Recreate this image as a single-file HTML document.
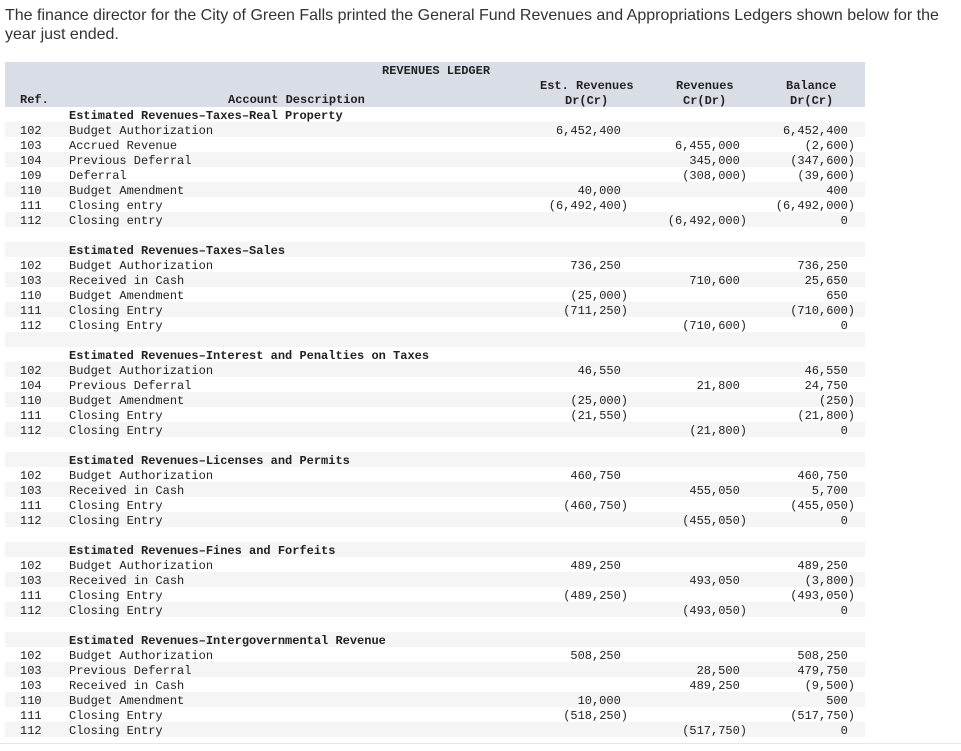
<!DOCTYPE html>
<html><head><meta charset="utf-8"><style>
body{margin:0;width:961px;height:751px;background:#fff;position:relative;overflow:hidden;font-family:"Liberation Sans",sans-serif;color:#333}
.intro{position:absolute;left:5px;top:6px;width:935px;font-size:16px;line-height:19px;color:#333}
.hd{position:absolute;left:5px;top:62px;width:860px;height:45px;background:#d9dde6}
.t{position:absolute;font-family:"Liberation Mono",monospace;font-size:12px;line-height:15px;white-space:pre;color:#222}
.b{font-weight:bold}
.r{position:absolute;left:5px;width:860px;height:15px;font-family:"Liberation Mono",monospace;font-size:12px;line-height:15px;white-space:pre;color:#222}
.g{background:#f5f5f5}
.r span{position:absolute;top:1.5px}
.ref{left:15px}.ds{left:64px}
.c1{right:237px;text-align:right}.c2{right:118px;text-align:right}.c3{right:10px;text-align:right}
.line{position:absolute;left:0;top:743px;width:961px;height:1px;background:#e6e6e6}
</style></head><body>
<div class="intro">The finance director for the City of Green Falls printed the General Fund Revenues and Appropriations Ledgers shown below for the year just ended.</div>
<div class="hd"></div>
<div class="t b" style="left:382px;top:64px">REVENUES LEDGER</div>
<div class="t b" style="left:20px;top:93px">Ref.</div>
<div class="t b" style="left:228px;top:93px">Account Description</div>
<div class="t b" style="left:540px;top:79px">Est. Revenues</div>
<div class="t b" style="left:565px;top:94px">Dr(Cr)</div>
<div class="t b" style="left:676px;top:79px">Revenues</div>
<div class="t b" style="left:683px;top:94px">Cr(Dr)</div>
<div class="t b" style="left:786px;top:79px">Balance</div>
<div class="t b" style="left:790px;top:94px">Dr(Cr)</div>

<div class="r" style="top:107px"><span class="ds b">Estimated Revenues–Taxes–Real Property</span></div>
<div class="r g" style="top:122px"><span class="ref">102</span><span class="ds">Budget Authorization</span><span class="c1">6,452,400 </span><span class="c3">6,452,400 </span></div>
<div class="r" style="top:137px"><span class="ref">103</span><span class="ds">Accrued Revenue</span><span class="c2">6,455,000 </span><span class="c3">(2,600)</span></div>
<div class="r g" style="top:152px"><span class="ref">104</span><span class="ds">Previous Deferral</span><span class="c2">345,000 </span><span class="c3">(347,600)</span></div>
<div class="r" style="top:167px"><span class="ref">109</span><span class="ds">Deferral</span><span class="c2">(308,000)</span><span class="c3">(39,600)</span></div>
<div class="r g" style="top:182px"><span class="ref">110</span><span class="ds">Budget Amendment</span><span class="c1">40,000 </span><span class="c3">400 </span></div>
<div class="r" style="top:197px"><span class="ref">111</span><span class="ds">Closing entry</span><span class="c1">(6,492,400)</span><span class="c3">(6,492,000)</span></div>
<div class="r g" style="top:212px"><span class="ref">112</span><span class="ds">Closing entry</span><span class="c2">(6,492,000)</span><span class="c3">0 </span></div>

<div class="r g" style="top:242px"><span class="ds b">Estimated Revenues–Taxes–Sales</span></div>
<div class="r" style="top:257px"><span class="ref">102</span><span class="ds">Budget Authorization</span><span class="c1">736,250 </span><span class="c3">736,250 </span></div>
<div class="r g" style="top:272px"><span class="ref">103</span><span class="ds">Received in Cash</span><span class="c2">710,600 </span><span class="c3">25,650 </span></div>
<div class="r" style="top:287px"><span class="ref">110</span><span class="ds">Budget Amendment</span><span class="c1">(25,000)</span><span class="c3">650 </span></div>
<div class="r g" style="top:302px"><span class="ref">111</span><span class="ds">Closing Entry</span><span class="c1">(711,250)</span><span class="c3">(710,600)</span></div>
<div class="r" style="top:317px"><span class="ref">112</span><span class="ds">Closing Entry</span><span class="c2">(710,600)</span><span class="c3">0 </span></div>
<div class="r g" style="top:332px"></div>

<div class="r" style="top:347px"><span class="ds b">Estimated Revenues–Interest and Penalties on Taxes</span></div>
<div class="r g" style="top:362px"><span class="ref">102</span><span class="ds">Budget Authorization</span><span class="c1">46,550 </span><span class="c3">46,550 </span></div>
<div class="r" style="top:377px"><span class="ref">104</span><span class="ds">Previous Deferral</span><span class="c2">21,800 </span><span class="c3">24,750 </span></div>
<div class="r g" style="top:392px"><span class="ref">110</span><span class="ds">Budget Amendment</span><span class="c1">(25,000)</span><span class="c3">(250)</span></div>
<div class="r" style="top:407px"><span class="ref">111</span><span class="ds">Closing Entry</span><span class="c1">(21,550)</span><span class="c3">(21,800)</span></div>
<div class="r g" style="top:422px"><span class="ref">112</span><span class="ds">Closing Entry</span><span class="c2">(21,800)</span><span class="c3">0 </span></div>

<div class="r g" style="top:452px"><span class="ds b">Estimated Revenues–Licenses and Permits</span></div>
<div class="r" style="top:467px"><span class="ref">102</span><span class="ds">Budget Authorization</span><span class="c1">460,750 </span><span class="c3">460,750 </span></div>
<div class="r g" style="top:482px"><span class="ref">103</span><span class="ds">Received in Cash</span><span class="c2">455,050 </span><span class="c3">5,700 </span></div>
<div class="r" style="top:497px"><span class="ref">111</span><span class="ds">Closing Entry</span><span class="c1">(460,750)</span><span class="c3">(455,050)</span></div>
<div class="r g" style="top:512px"><span class="ref">112</span><span class="ds">Closing Entry</span><span class="c2">(455,050)</span><span class="c3">0 </span></div>

<div class="r g" style="top:542px"><span class="ds b">Estimated Revenues–Fines and Forfeits</span></div>
<div class="r" style="top:557px"><span class="ref">102</span><span class="ds">Budget Authorization</span><span class="c1">489,250 </span><span class="c3">489,250 </span></div>
<div class="r g" style="top:572px"><span class="ref">103</span><span class="ds">Received in Cash</span><span class="c2">493,050 </span><span class="c3">(3,800)</span></div>
<div class="r" style="top:587px"><span class="ref">111</span><span class="ds">Closing Entry</span><span class="c1">(489,250)</span><span class="c3">(493,050)</span></div>
<div class="r g" style="top:602px"><span class="ref">112</span><span class="ds">Closing Entry</span><span class="c2">(493,050)</span><span class="c3">0 </span></div>

<div class="r g" style="top:632px"><span class="ds b">Estimated Revenues–Intergovernmental Revenue</span></div>
<div class="r" style="top:647px"><span class="ref">102</span><span class="ds">Budget Authorization</span><span class="c1">508,250 </span><span class="c3">508,250 </span></div>
<div class="r g" style="top:662px"><span class="ref">103</span><span class="ds">Previous Deferral</span><span class="c2">28,500 </span><span class="c3">479,750 </span></div>
<div class="r" style="top:677px"><span class="ref">103</span><span class="ds">Received in Cash</span><span class="c2">489,250 </span><span class="c3">(9,500)</span></div>
<div class="r g" style="top:692px"><span class="ref">110</span><span class="ds">Budget Amendment</span><span class="c1">10,000 </span><span class="c3">500 </span></div>
<div class="r" style="top:707px"><span class="ref">111</span><span class="ds">Closing Entry</span><span class="c1">(518,250)</span><span class="c3">(517,750)</span></div>
<div class="r g" style="top:722px"><span class="ref">112</span><span class="ds">Closing Entry</span><span class="c2">(517,750)</span><span class="c3">0 </span></div>
<div class="line"></div>
</body></html>
